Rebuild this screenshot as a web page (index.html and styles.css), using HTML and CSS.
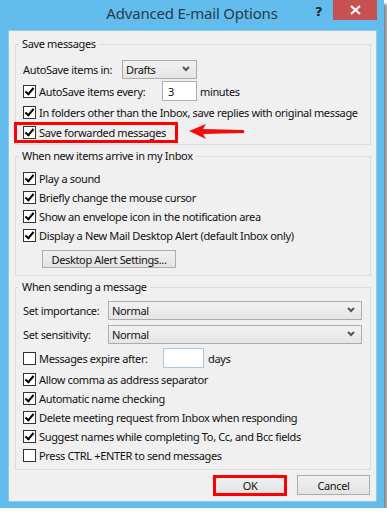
FILE: index.html
```html
<!DOCTYPE html>
<html lang="en">

<head>
    <meta charset="UTF-8">
    <meta name="viewport" content="width=device-width, initial-scale=1.0">
    <title>Advanced E-mail Options</title>
    <link rel="stylesheet" href="styles.css">
</head>

<body>
    <div class="window">
        <div class="titlebar">
            <span class="title">Advanced E-mail Options</span>
            <span class="help">?</span>
            <span class="close">
                <svg width="11" height="10" viewBox="0 0 11 10"><path d="M1 1 L10 9 M10 1 L1 9" stroke="#fff" stroke-width="2.2"/></svg>
            </span>
        </div>

        <div class="client">
            <fieldset class="group g1">
                <legend>Save messages</legend>
                <div class="row h22">
                    <span class="label w99">AutoSave items in:</span>
                    <div class="select drafts">Drafts<svg class="chev" width="8" height="6" viewBox="0 0 8 6"><path d="M1 1 L4 4 L7 1" stroke="#555" stroke-width="2" fill="none"/></svg></div>
                </div>
                <div class="row h22">
                    <span class="cb on"></span>
                    <span class="label w123">AutoSave items every:</span>
                    <div class="textbox num">3</div>
                    <span class="label">minutes</span>
                </div>
                <div class="row h20">
                    <span class="cb on"></span>
                    <span>In folders other than the Inbox, save replies with original message</span>
                </div>
                <div class="row h20">
                    <div class="marked">
                        <span class="cb on"></span>
                        <span>Save forwarded messages</span>
                    </div>
                    <svg class="arrow" width="56" height="16" viewBox="0 0 56 16"><path d="M0 7 L17 0 L14 5 L55 6 L55 9 L14 10 L17 15 Z" fill="#f20d0d"/></svg>
                </div>
            </fieldset>

            <fieldset class="group g2">
                <legend>When new items arrive in my Inbox</legend>
                <div class="row h19"><span class="cb on"></span><span>Play a sound</span></div>
                <div class="row h19"><span class="cb on"></span><span>Briefly change the mouse cursor</span></div>
                <div class="row h19"><span class="cb on"></span><span>Show an envelope icon in the notification area</span></div>
                <div class="row h19"><span class="cb on"></span><span>Display a New Mail Desktop Alert (default Inbox only)</span></div>
                <button class="btn alert">Desktop Alert Settings...</button>
            </fieldset>

            <fieldset class="group g3">
                <legend>When sending a message</legend>
                <div class="row h24">
                    <span class="label w85">Set importance:</span>
                    <div class="select wide">Normal<svg class="chev" width="8" height="6" viewBox="0 0 8 6"><path d="M1 1 L4 4 L7 1" stroke="#555" stroke-width="2" fill="none"/></svg></div>
                </div>
                <div class="row h24">
                    <span class="label w85">Set sensitivity:</span>
                    <div class="select wide">Normal<svg class="chev" width="8" height="6" viewBox="0 0 8 6"><path d="M1 1 L4 4 L7 1" stroke="#555" stroke-width="2" fill="none"/></svg></div>
                </div>
                <div class="row h24">
                    <span class="cb"></span>
                    <span class="label w124">Messages expire after:</span>
                    <div class="textbox days"></div>
                    <span class="label">days</span>
                </div>
                <div class="row h19"><span class="cb on"></span><span>Allow comma as address separator</span></div>
                <div class="row h19"><span class="cb on"></span><span>Automatic name checking</span></div>
                <div class="row h19"><span class="cb on"></span><span>Delete meeting request from Inbox when responding</span></div>
                <div class="row h19"><span class="cb on"></span><span>Suggest names while completing To, Cc, and Bcc fields</span></div>
                <div class="row h19"><span class="cb"></span><span>Press CTRL +ENTER to send messages</span></div>
            </fieldset>

            <div class="buttons">
                <button class="btn ok">OK</button>
                <button class="btn cancel">Cancel</button>
            </div>
        </div>
    </div>
</body>

</html>
```

FILE: styles.css
```css
* {
    margin: 0;
    padding: 0;
    box-sizing: border-box;
}

body {
    background: #fff;
    font-family: "Noto Sans", "Open Sans", sans-serif;
    font-size: 11px;
    letter-spacing: -0.35px;
    color: #111;
}

.window {
    width: 384px;
    height: 508px;
    background: #62bdee;
    box-shadow: 3px 4px 2px rgba(0, 0, 0, 0.45);
    display: flex;
    flex-direction: column;
}

.titlebar {
    height: 30px;
    display: flex;
    align-items: flex-start;
    position: relative;
}

.title {
    position: absolute;
    left: 0;
    right: 0;
    top: 3px;
    text-align: center;
    font-size: 15px;
    letter-spacing: -0.2px;
    color: #2b3a44;
}

.help {
    margin-left: 315px;
    margin-top: 4px;
    font-family: "DejaVu Sans", sans-serif;
    font-weight: bold;
    font-size: 13px;
    color: #222;
    width: 18px;
}

.close {
    width: 44px;
    height: 20px;
    background: #c75050;
    display: flex;
    align-items: center;
    justify-content: center;
}

.client {
    flex: 1;
    margin: 0 7px 6px 8px;
    background: #f0f0f0;
    border: 1px solid #8ec9e8;
    padding: 5px 5px 0 6px;
}

.group {
    border: 1px solid #dcdcdc;
    padding: 0 7px 2px 7px;
    min-width: 0;
}

.group legend {
    line-height: 16px;
    padding: 0 3px;
    margin-left: -4px;
}

.g1 {
    padding-top: 6px;
}

.g2 {
    margin-top: 3px;
    padding-top: 5px;
    padding-bottom: 7px;
}

.g3 {
    margin-top: 3px;
    padding-top: 3px;
    padding-bottom: 4px;
}

.row {
    display: flex;
    align-items: center;
    white-space: nowrap;
}

.h19 { height: 19px; }
.h20 { height: 20px; }
.h22 { height: 22px; }
.h24 { height: 24px; }

.w85 { width: 85px; }
.w99 { width: 99px; }
.w123 { width: 123px; }
.w124 { width: 124px; }

.cb {
    width: 13px;
    height: 13px;
    border: 1px solid #333;
    background: #fff;
    margin-right: 3px;
    flex: none;
    position: relative;
}

.cb.on::after {
    content: "";
    position: absolute;
    left: 3px;
    top: 0px;
    width: 3px;
    height: 7px;
    border: solid #000;
    border-width: 0 2px 2px 0;
    transform: rotate(40deg);
}

.select {
    height: 19px;
    border: 1px solid #acacac;
    background: linear-gradient(#f2f2f2, #e5e5e5);
    display: flex;
    align-items: center;
    justify-content: space-between;
    padding: 0 6px 0 3px;
}

.drafts { width: 75px; }
.wide { width: 254px; }

.textbox {
    height: 20px;
    background: #fff;
    border: 1px solid #abadb3;
    padding-left: 5px;
    display: flex;
    align-items: center;
}

.num {
    width: 35px;
    margin-right: 3px;
}

.days {
    width: 41px;
    border-color: #a8c8e0;
    margin-right: 4px;
}

.marked {
    display: flex;
    align-items: center;
    height: 21px;
    margin-left: -9px;
    padding: 0 9px 0 6px;
    border: 3px solid #f00;
}

.arrow {
    margin-left: 11px;
}

.btn {
    font-family: inherit;
    font-size: 11px;
    letter-spacing: inherit;
    color: #111;
    background: linear-gradient(#f0f0f0, #e3e3e3);
    border: 1px solid #acacac;
    height: 20px;
}

.alert {
    margin: 5px 0 0 19px;
    width: 134px;
    height: 18px;
}

.buttons {
    display: flex;
    justify-content: flex-end;
    gap: 10px;
    margin-top: 5px;
    padding-right: 1px;
}

.ok {
    width: 74px;
    height: 21px;
    border: 3px solid #f00;
}

.cancel {
    width: 73px;
}
```
